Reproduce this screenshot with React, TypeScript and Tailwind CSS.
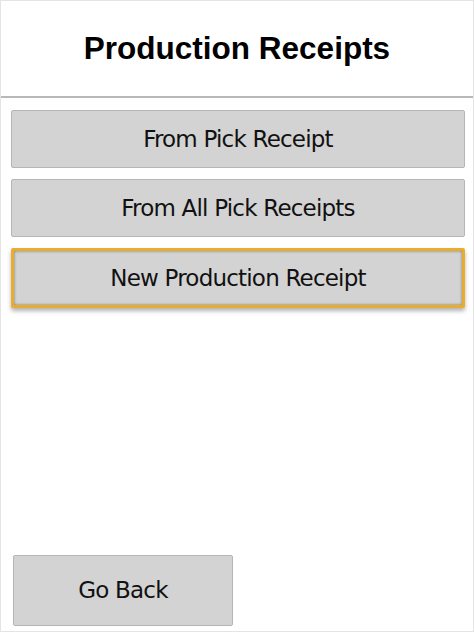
import React from "react";

const btnFont = { fontFamily: '"DejaVu Sans", Tahoma, sans-serif' };

function MenuButton({ label, focused }: { label: string; focused?: boolean }) {
  return (
    <button
      type="button"
      style={btnFont}
      className={`w-full flex items-center justify-center bg-[#d3d3d3] text-[#111] text-[23px] tracking-[-0.8px] rounded-[2px] ${
        focused
          ? "h-[60px] border-[3px] border-[#e8ad2f] shadow-[inset_0_0_3px_rgba(0,0,0,0.45),0_3px_4px_rgba(0,0,0,0.3)]"
          : "h-[58px] border border-[#b5b5b5]"
      }`}
    >
      {label}
    </button>
  );
}

export default function App() {
  return (
    <div className="w-[474px] h-[632px] bg-white border border-[#e4e4e4] flex flex-col overflow-hidden">
      <div className="h-[97px] flex items-center justify-center border-b-2 border-[#b8b8b8] shrink-0">
        <h1
          className="text-[31.5px] font-bold text-black"
          style={{ fontFamily: '"Liberation Sans", Arial, sans-serif' }}
        >
          Production Receipts
        </h1>
      </div>
      <div className="flex flex-col gap-[11px] pl-[10px] pr-[8px] pt-[12px]">
        <MenuButton label="From Pick Receipt" />
        <MenuButton label="From All Pick Receipts" />
        <MenuButton label="New Production Receipt" focused />
      </div>
      <div className="mt-auto px-[12px] pb-[5px]">
        <button
          type="button"
          style={btnFont}
          className="w-[220px] h-[71px] flex items-center justify-center bg-[#d3d3d3] border border-[#b5b5b5] rounded-[2px] text-[#111] text-[23px] tracking-[-0.8px]"
        >
          Go Back
        </button>
      </div>
    </div>
  );
}
